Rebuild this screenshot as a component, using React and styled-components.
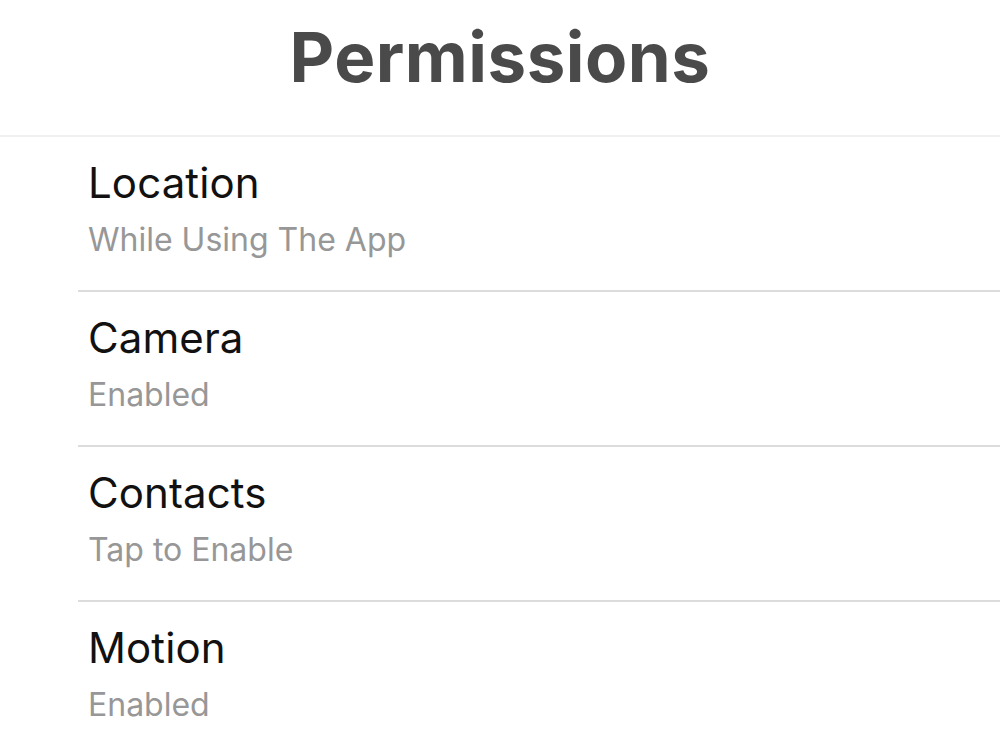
import styled, { createGlobalStyle } from 'styled-components'

const GlobalStyle = createGlobalStyle`
  html, body {
    margin: 0;
    padding: 0;
    background: #fff;
  }
  body {
    font-family: Inter, 'Noto Sans', sans-serif;
    -webkit-font-smoothing: antialiased;
  }
`

const permissions = [
  { name: 'Location', status: 'While Using The App' },
  { name: 'Camera', status: 'Enabled' },
  { name: 'Contacts', status: 'Tap to Enable' },
  { name: 'Motion', status: 'Enabled' },
]

const App = () => {
  return (
    <Screen>
      <GlobalStyle />
      <Header>
        <Title>Permissions</Title>
      </Header>
      <List>
        {permissions.map((p) => (
          <Row key={p.name}>
            <Name>{p.name}</Name>
            <Status>{p.status}</Status>
          </Row>
        ))}
      </List>
    </Screen>
  )
}

const Screen = styled.main`
  width: 1000px;
  height: 750px;
  overflow: hidden;
  background: #fff;
`

const Header = styled.header`
  height: 135px;
  border-bottom: 2px solid #f0f0f0;
  display: flex;
  justify-content: center;
  align-items: flex-start;
`

const Title = styled.h1`
  margin: 15px 0 0;
  font-size: 69px;
  font-weight: 700;
  color: #4a4a4a;
  letter-spacing: 0.5px;
  line-height: 84px;
`

const List = styled.ul`
  list-style: none;
  margin: 0;
  padding: 0 0 0 78px;
`

const Row = styled.li`
  height: 155px;
  box-sizing: border-box;
  padding: 21px 0 0 10px;
  border-bottom: 2px solid #dcdcdc;
  display: flex;
  flex-direction: column;
`

const Name = styled.span`
  font-size: 42px;
  line-height: 50px;
  color: #111;
  letter-spacing: 0.1px;
`

const Status = styled.span`
  margin-top: 12px;
  font-size: 32px;
  line-height: 40px;
  color: #979797;
  letter-spacing: 0;
`

export default App
